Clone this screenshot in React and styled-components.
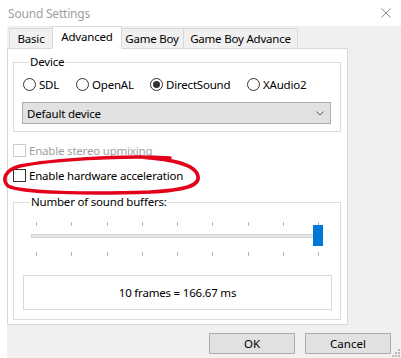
import React from "react";
import styled, { createGlobalStyle } from "styled-components";

const GlobalStyle = createGlobalStyle`
  html, body { margin: 0; padding: 0; background: #fff; }
  body {
    font-family: "Noto Sans", "Liberation Sans", sans-serif;
    font-size: 11.5px;
    letter-spacing: -0.2px;
    color: #000;
  }
`;

const Window = styled.div`
  position: relative;
  width: 401px;
  height: 358px;
  background: #fff;
  overflow: hidden;
  display: flex;
  flex-direction: column;
`;

const TitleBar = styled.div`
  height: 26px;
  display: flex;
  align-items: center;
  justify-content: space-between;
  padding: 0 10px 0 8px;
  color: #a0a0a0;
  font-size: 12px;
`;

const Client = styled.div`
  flex: 1;
  margin-left: 7px;
  background: #f0f0f0;
  display: flex;
  flex-direction: column;
`;

const TabStrip = styled.div`
  height: 23px;
  display: flex;
  align-items: flex-end;
  padding-left: 2px;
  position: relative;
  z-index: 1;
  margin-bottom: -1px;
`;

const Tab = styled.div`
  box-sizing: border-box;
  width: ${(p) => p.$w}px;
  height: ${(p) => (p.$active ? 23 : 21)}px;
  margin: 0 ${(p) => (p.$active ? -1 : 0)}px;
  border: 1px solid #d9d9d9;
  border-left-width: ${(p) => (p.$first || p.$active ? 1 : 0)}px;
  border-bottom-color: ${(p) => (p.$active ? "#fff" : "#d9d9d9")};
  background: ${(p) => (p.$active ? "#fff" : "#f0f0f0")};
  display: flex;
  align-items: ${(p) => (p.$active ? "flex-start" : "center")};
  justify-content: center;
  padding-top: ${(p) => (p.$active ? 2 : 0)}px;
  white-space: nowrap;
  position: relative;
  z-index: ${(p) => (p.$active ? 2 : 1)};
`;

const Panel = styled.div`
  box-sizing: border-box;
  width: 341px;
  height: 277px;
  background: #fff;
  border: 1px solid #d9d9d9;
  padding: 6px 6px 7px 5px;
  display: flex;
  flex-direction: column;
`;

const GroupBox = styled.fieldset`
  margin: 0;
  margin-top: ${(p) => p.$top || 0}px;
  border: 1px solid #dcdcdc;
  padding: ${(p) => p.$pad};
  min-width: 0;
  display: flex;
  flex-direction: column;
`;

const Legend = styled.legend`
  padding: 0 1px;
  margin-left: 7px;
  line-height: 14px;
`;

const RadioRow = styled.div`
  display: flex;
  height: 16px;
  align-items: center;
  margin: 7px 0 0 1px;
`;

const RadioItem = styled.label`
  width: ${(p) => p.$w}px;
  display: flex;
  align-items: center;
  gap: 3px;
  white-space: nowrap;
`;

const RadioCircle = styled.span`
  box-sizing: border-box;
  width: 13px;
  height: 13px;
  border-radius: 50%;
  border: 1px solid #333;
  background: #fff;
  display: flex;
  align-items: center;
  justify-content: center;
  flex: none;
  &::after {
    content: "";
    width: 7px;
    height: 7px;
    border-radius: 50%;
    background: #333;
    display: ${(p) => (p.$checked ? "block" : "none")};
  }
`;

const Select = styled.div`
  box-sizing: border-box;
  height: 22px;
  margin-top: 10px;
  background: #e1e1e1;
  border: 1px solid #adadad;
  display: flex;
  align-items: center;
  justify-content: space-between;
  padding: 0 6px 0 4px;
`;

const CheckRow = styled.label`
  display: flex;
  align-items: center;
  gap: 3px;
  height: 16px;
  margin-top: ${(p) => p.$top}px;
  color: ${(p) => (p.$disabled ? "#a0a0a0" : "#000")};
  white-space: nowrap;
`;

const CheckBox = styled.span`
  box-sizing: border-box;
  width: 13px;
  height: 13px;
  border: 1px solid ${(p) => (p.$disabled ? "#cccccc" : "#333")};
  background: #fff;
  flex: none;
`;

const Slider = styled.div`
  position: relative;
  height: 40px;
  margin-top: 13px;
`;

const Ticks = styled.div`
  display: flex;
  justify-content: space-between;
  padding: 0 13px 0 13px;
  height: 4px;
  margin-top: ${(p) => p.$top}px;
  span {
    width: 1px;
    height: 100%;
    background: #b4b4b4;
  }
`;

const Track = styled.div`
  box-sizing: border-box;
  height: 4px;
  margin: 8px 9px 0 8px;
  background: #e7e7e7;
  border: 1px solid #d6d6d6;
`;

const Thumb = styled.div`
  position: absolute;
  top: 3px;
  right: 9px;
  width: 10px;
  height: 21px;
  background: #0078d7;
`;

const ValueBox = styled.div`
  box-sizing: border-box;
  height: 35px;
  margin-top: 13px;
  border: 1px solid #dadada;
  display: flex;
  align-items: center;
  justify-content: center;
`;

const ButtonBar = styled.div`
  display: flex;
  justify-content: flex-end;
  gap: 10px;
  padding: 8px 10px 0 0;
  position: relative;
  flex: 1;
`;

const Button = styled.button`
  box-sizing: border-box;
  width: 86px;
  height: 21px;
  background: #e1e1e1;
  border: 1px solid #adadad;
  font: inherit;
  color: #000;
  padding: 0;
`;

const Grip = styled.svg`
  position: absolute;
  right: 1px;
  bottom: 1px;
`;

const Annotation = styled.svg`
  position: absolute;
  left: 0;
  top: 0;
  pointer-events: none;
`;

export default function App() {
  return (
    <>
      <GlobalStyle />
      <Window>
        <TitleBar>
          <span>Sound Settings</span>
          <svg width="10" height="10" viewBox="0 0 10 10">
            <path d="M0.5 0.5 L9.5 9.5 M9.5 0.5 L0.5 9.5" stroke="#8a8a8a" strokeWidth="1" />
          </svg>
        </TitleBar>
        <Client>
          <TabStrip>
            <Tab $w={44} $first>Basic</Tab>
            <Tab $w={70} $active>Advanced</Tab>
            <Tab $w={63}>Game Boy</Tab>
            <Tab $w={114}>Game Boy Advance</Tab>
          </TabStrip>
          <Panel>
            <GroupBox $pad="0 9px 7px 8px">
              <Legend>Device</Legend>
              <RadioRow>
                <RadioItem $w={53}>
                  <RadioCircle />
                  SDL
                </RadioItem>
                <RadioItem $w={74}>
                  <RadioCircle />
                  OpenAL
                </RadioItem>
                <RadioItem $w={97}>
                  <RadioCircle $checked />
                  DirectSound
                </RadioItem>
                <RadioItem $w={80}>
                  <RadioCircle />
                  XAudio2
                </RadioItem>
              </RadioRow>
              <Select>
                <span>Default device</span>
                <svg width="8" height="5" viewBox="0 0 8 5">
                  <path d="M0.5 0.5 L4 4 L7.5 0.5" fill="none" stroke="#555" strokeWidth="1" />
                </svg>
              </Select>
            </GroupBox>
            <CheckRow $top={11} $disabled>
              <CheckBox $disabled />
              Enable stereo upmixing
            </CheckRow>
            <CheckRow $top={10}>
              <CheckBox />
              Enable hardware acceleration
            </CheckRow>
            <GroupBox $top={12} $pad="0 8px 9px 9px">
              <Legend>Number of sound buffers:</Legend>
              <Slider>
                <Ticks $top={0}>
                  {Array.from({ length: 9 }, (_, i) => (
                    <span key={i} />
                  ))}
                </Ticks>
                <Track />
                <Ticks $top={14}>
                  {Array.from({ length: 9 }, (_, i) => (
                    <span key={i} />
                  ))}
                </Ticks>
                <Thumb />
              </Slider>
              <ValueBox>10 frames = 166.67 ms</ValueBox>
            </GroupBox>
          </Panel>
          <ButtonBar>
            <Button>OK</Button>
            <Button>Cancel</Button>
            <Grip width="8" height="8" viewBox="0 0 8 8">
              <g fill="#bcbcbc">
                <rect x="6" y="0" width="2" height="2" />
                <rect x="3" y="3" width="2" height="2" />
                <rect x="6" y="3" width="2" height="2" />
                <rect x="0" y="6" width="2" height="2" />
                <rect x="3" y="6" width="2" height="2" />
                <rect x="6" y="6" width="2" height="2" />
              </g>
            </Grip>
          </ButtonBar>
        </Client>
        <Annotation width="401" height="358" viewBox="0 0 401 358">
          <path
            d="M170 158 C120 155 50 160 20 166 C4 170 2 180 8 186 C20 193 90 194 150 192 C185 190 200 186 198 176 C196 166 180 160 140 157"
            fill="none"
            stroke="#e2001a"
            strokeWidth="3.5"
            strokeLinecap="round"
          />
        </Annotation>
      </Window>
    </>
  );
}
